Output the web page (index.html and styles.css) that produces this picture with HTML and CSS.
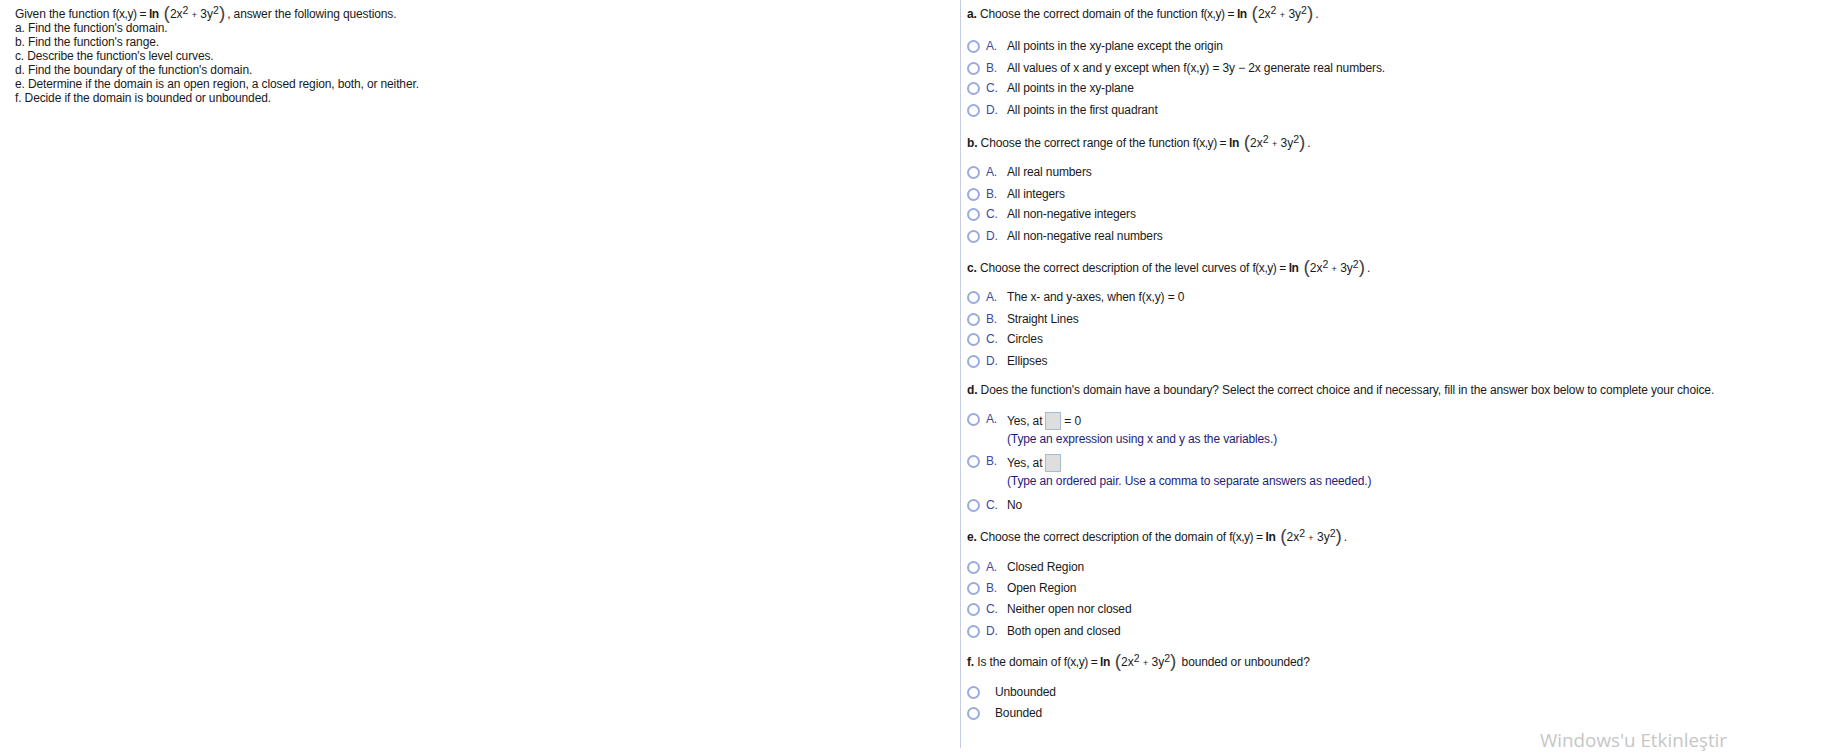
FILE: index.html
```html
<!DOCTYPE html>
<html lang="en">
<head>
<meta charset="utf-8">
<title>Function questions</title>
<link rel="stylesheet" href="styles.css">
</head>
<body>
<main class="page">
  <section class="left">
    <div class="intro">Given the function <span class="fx">f(x,y) = <b>ln</b> <span class="math"><span class="paren">(</span>2x<sup>2</sup> <small>+</small> 3y<sup>2</sup><span class="paren">)</span></span></span>, answer the following questions.</div>
    <div>a. Find the function's domain.</div>
    <div>b. Find the function's range.</div>
    <div>c. Describe the function's level curves.</div>
    <div>d. Find the boundary of the function's domain.</div>
    <div>e. Determine if the domain is an open region, a closed region, both, or neither.</div>
    <div>f. Decide if the domain is bounded or unbounded.</div>
  </section>
  <section class="right">
    <h2 class="q"><b>a.</b> Choose the correct domain of the function <span class="fx">f(x,y) = <b>ln</b> <span class="math"><span class="paren">(</span>2x<sup>2</sup> <small>+</small> 3y<sup>2</sup><span class="paren">)</span></span></span>.</h2>
    <ul class="opts opts-a">
      <li class="opt gap2"><i class="radio"></i><span class="let">A.</span><span>All points in the xy-plane except the origin</span></li>
      <li class="opt"><i class="radio"></i><span class="let">B.</span><span>All values of x and y except when f(x,y) = 3y − 2x generate real numbers.</span></li>
      <li class="opt gap2"><i class="radio"></i><span class="let">C.</span><span>All points in the xy-plane</span></li>
      <li class="opt"><i class="radio"></i><span class="let">D.</span><span>All points in the first quadrant</span></li>
    </ul>
    <h2 class="q"><b>b.</b> Choose the correct range of the function <span class="fx">f(x,y) = <b>ln</b> <span class="math"><span class="paren">(</span>2x<sup>2</sup> <small>+</small> 3y<sup>2</sup><span class="paren">)</span></span></span>.</h2>
    <ul class="opts opts-b">
      <li class="opt gap2"><i class="radio"></i><span class="let">A.</span><span>All real numbers</span></li>
      <li class="opt"><i class="radio"></i><span class="let">B.</span><span>All integers</span></li>
      <li class="opt gap2"><i class="radio"></i><span class="let">C.</span><span>All non-negative integers</span></li>
      <li class="opt"><i class="radio"></i><span class="let">D.</span><span>All non-negative real numbers</span></li>
    </ul>
    <h2 class="q"><b>c.</b> Choose the correct description of the level curves of <span class="fx">f(x,y) = <b>ln</b> <span class="math"><span class="paren">(</span>2x<sup>2</sup> <small>+</small> 3y<sup>2</sup><span class="paren">)</span></span></span>.</h2>
    <ul class="opts opts-c">
      <li class="opt gap2"><i class="radio"></i><span class="let">A.</span><span>The x- and y-axes, when f(x,y) = 0</span></li>
      <li class="opt"><i class="radio"></i><span class="let">B.</span><span>Straight Lines</span></li>
      <li class="opt gap2"><i class="radio"></i><span class="let">C.</span><span>Circles</span></li>
      <li class="opt"><i class="radio"></i><span class="let">D.</span><span>Ellipses</span></li>
    </ul>
    <h2 class="q"><b>d.</b> Does the function's domain have a boundary? Select the correct choice and if necessary, fill in the answer box below to complete your choice.</h2>
    <ul class="opts opts-d">
      <li class="opt opt-box"><i class="radio"></i><span class="let">A.</span><div><div class="boxline">Yes, at <span class="box"></span> = 0</div><div class="note">(Type an expression using x and y as the variables.)</div></div></li>
      <li class="opt opt-box"><i class="radio"></i><span class="let">B.</span><div><div class="boxline">Yes, at <span class="box"></span></div><div class="note">(Type an ordered pair. Use a comma to separate answers as needed.)</div></div></li>
      <li class="opt"><i class="radio"></i><span class="let">C.</span><span>No</span></li>
    </ul>
    <h2 class="q"><b>e.</b> Choose the correct description of the domain of <span class="fx">f(x,y) = <b>ln</b> <span class="math"><span class="paren">(</span>2x<sup>2</sup> <small>+</small> 3y<sup>2</sup><span class="paren">)</span></span></span>.</h2>
    <ul class="opts opts-e">
      <li class="opt gap1"><i class="radio"></i><span class="let">A.</span><span>Closed Region</span></li>
      <li class="opt gap1"><i class="radio"></i><span class="let">B.</span><span>Open Region</span></li>
      <li class="opt gap2"><i class="radio"></i><span class="let">C.</span><span>Neither open nor closed</span></li>
      <li class="opt"><i class="radio"></i><span class="let">D.</span><span>Both open and closed</span></li>
    </ul>
    <h2 class="q"><b>f.</b> Is the domain of <span class="fx">f(x,y) = <b>ln</b> <span class="math"><span class="paren">(</span>2x<sup>2</sup> <small>+</small> 3y<sup>2</sup><span class="paren">)</span></span></span> bounded or unbounded?</h2>
    <ul class="opts">
      <li class="opt opt-plain gap1"><i class="radio"></i><span>Unbounded</span></li>
      <li class="opt opt-plain"><i class="radio"></i><span>Bounded</span></li>
    </ul>
  </section>
</main>
<div class="watermark">Windows'u Etkinleştir</div>
</body>
</html>
```

FILE: styles.css
```css
* { box-sizing: border-box; }
html, body { margin: 0; padding: 0; height: 100%; overflow: hidden; background: #fff; }
body {
  font-family: "Liberation Sans", Arial, sans-serif;
  font-size: 12px;
  letter-spacing: -0.13px;
  color: #1a1a1a;
  position: relative;
}
.page { display: flex; align-items: flex-start; }
.left {
  width: 960px;
  flex: none;
  padding: 7px 0 0 15px;
  line-height: 14px;
}
.intro { height: 14px; white-space: nowrap; }
.right {
  flex: 1;
  height: 748px;
  border-left: 1px solid #c6cde0;
  padding: 4px 0 0 6px;
}
.q {
  margin: 0;
  font-size: 12px;
  font-weight: normal;
  height: 20px;
  line-height: 20px;
  white-space: nowrap;
}
.q b, .fx b { font-weight: bold; }
.fx { letter-spacing: -0.45px; }
.math { letter-spacing: 0; margin: 0 2px 0 2px; }
.paren {
  font-size: 19px;
  color: #444;
  line-height: 12px;
  vertical-align: -1px;
}
sup { font-size: 10.5px; line-height: 0; vertical-align: 4px; }
small { font-size: 9px; }
.opts { list-style: none; margin: 10px 0 12px; padding: 0; }
.opts-a { margin-top: 12px; margin-bottom: 13px; }
.opts-b { margin-top: 9px; margin-bottom: 12px; }
.opts-c { margin-top: 9px; margin-bottom: 9px; }
.opts-d { margin-top: 11px; }
.opts-e { margin-bottom: 11px; }
.opt { display: flex; align-items: center; height: 20px; white-space: nowrap; }
.gap2 { margin-bottom: 2px; }
.gap1 { margin-bottom: 1px; }
.radio {
  width: 13px;
  height: 13px;
  flex: none;
  border: 2px solid #9aabe0;
  border-radius: 50%;
  margin-right: 6px;
  background: #fff;
}
.let { width: 21px; flex: none; color: #3b48a8; }
.opt-plain .radio { margin-right: 15px; }
.opt-box { align-items: flex-start; height: 42px; }
.opt-box .radio { margin-top: 2px; }
.opt-box .let { line-height: 16px; }
.boxline { display: flex; align-items: center; height: 20px; gap: 3px; }
.box {
  width: 16px;
  height: 18px;
  background: #dedede;
  border: 1px solid #a7bccd;
}
.note { color: #1c1c80; height: 14px; line-height: 14px; margin-top: 1px; }
.watermark {
  position: absolute;
  left: 1540px;
  top: 728px;
  font-family: "Open Sans", sans-serif;
  font-size: 18.8px;
  letter-spacing: 0;
  line-height: 24px;
  color: #c6c6c6;
  white-space: nowrap;
}
```
